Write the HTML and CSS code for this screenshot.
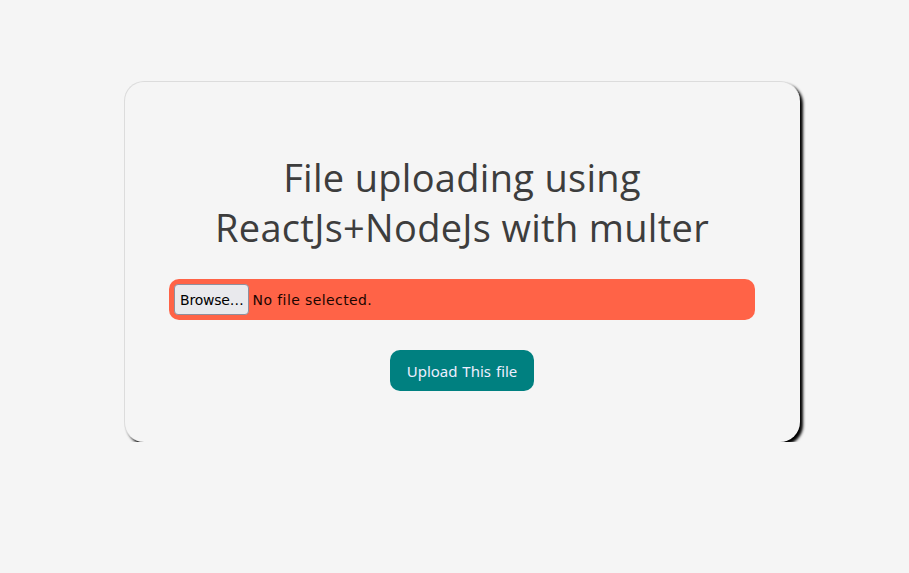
FILE: index.html
```html
<!DOCTYPE html>
<html>
<head>
<meta charset="utf-8">
<link rel="stylesheet" href="styles.css">
</head>
<body>
<div class="card">
  <h1 class="title">File uploading using<br>ReactJs+NodeJs with multer</h1>
  <div class="file-row">
    <span class="browse">Browse…</span>
    <span class="status">No file selected.</span>
  </div>
  <div class="actions">
    <span class="upload">Upload This file</span>
  </div>
</div>
</body>
</html>
```
FILE: styles.css
```css
html, body {
  margin: 0;
  padding: 0;
  background: #f5f5f5;
}
body {
  padding-top: 81px;
  padding-left: 124px;
}
.card {
  box-sizing: border-box;
  width: 676px;
  height: 361px;
  background: #f5f5f5;
  border-radius: 20px;
  border-top: 1px solid #dcdcdc;
  border-left: 1px solid #dcdcdc;
  box-shadow: 3px 3px 3px #000;
  padding: 70px 45px 0 44px;
  display: flex;
  flex-direction: column;
  align-items: stretch;
}
.title {
  margin: 0;
  font-family: "Open Sans", sans-serif;
  font-weight: 500;
  font-size: 38px;
  line-height: 50px;
  letter-spacing: 0.3px;
  color: #3d3d3d;
  text-align: center;
}
.file-row {
  margin-top: 27px;
  height: 41px;
  box-sizing: border-box;
  background: #ff6347;
  border-radius: 10px;
  padding: 5px;
  display: flex;
  align-items: center;
  gap: 4px;
  font-family: "DejaVu Sans", sans-serif;
  font-size: 14px;
}
.browse {
  box-sizing: border-box;
  height: 31px;
  display: flex;
  align-items: center;
  padding: 0 4px 0 5px;
  background: #e9e9ed;
  border: 1px solid #8f8f9d;
  border-radius: 4px;
  color: #000;
  letter-spacing: -0.2px;
}
.status {
  color: #1a0500;
  letter-spacing: 0.4px;
}
.actions {
  margin-top: 30px;
  display: flex;
  justify-content: center;
}
.upload {
  box-sizing: border-box;
  height: 41px;
  width: 144px;
  display: flex;
  align-items: center;
  justify-content: center;
  background: #008080;
  color: #eef;
  border-radius: 10px;
  font-family: "Noto Sans", sans-serif;
  font-size: 15px;
  word-spacing: 1px;
}
```
